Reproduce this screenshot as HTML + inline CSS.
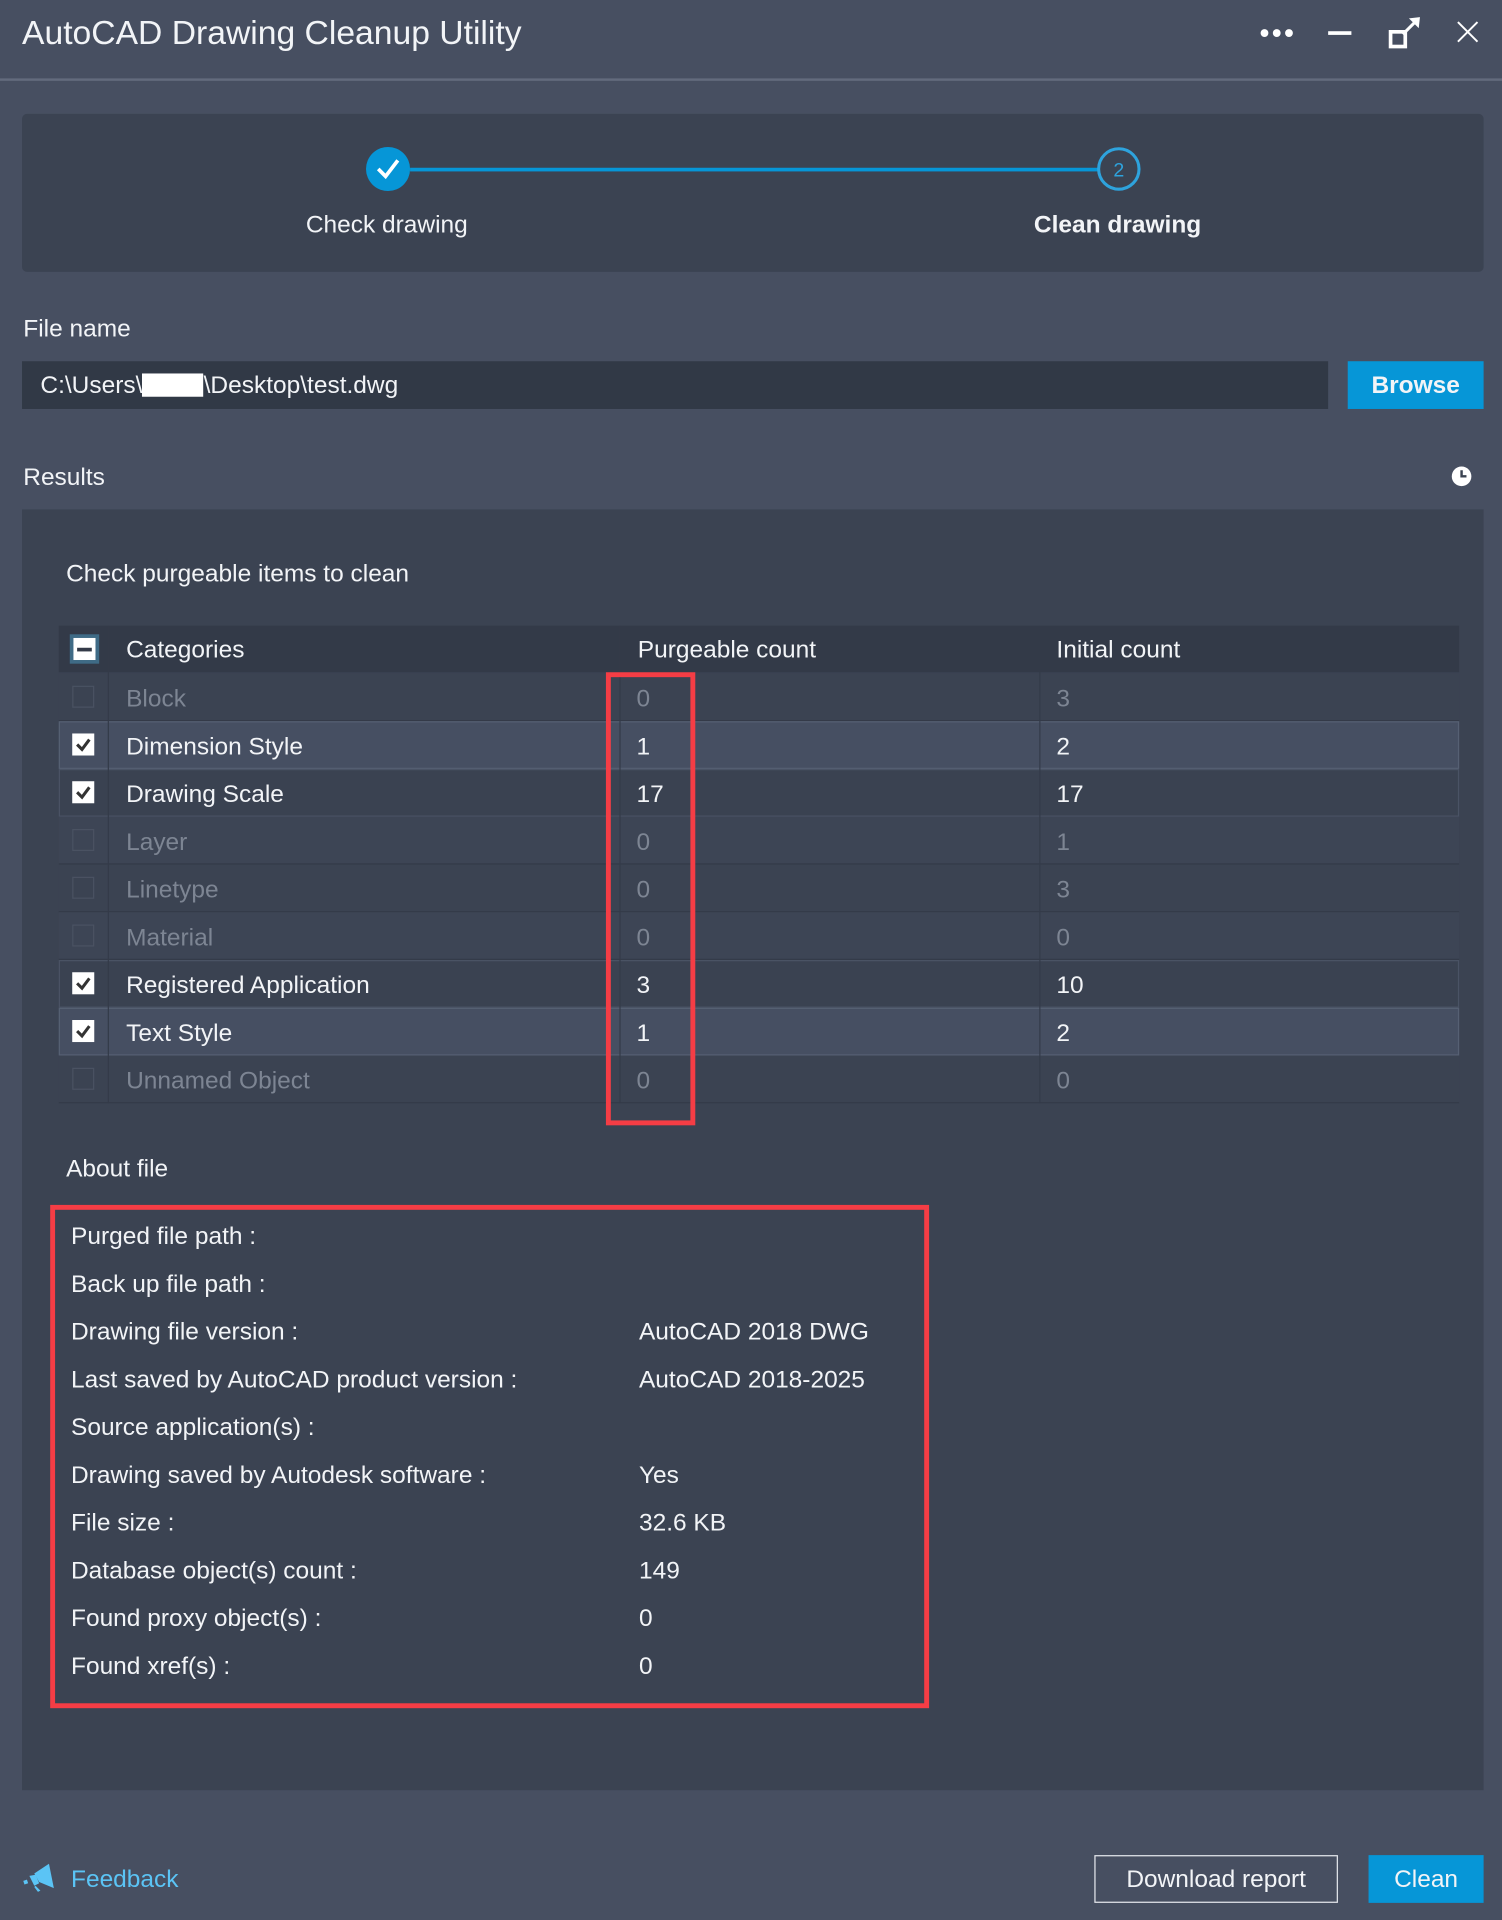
<!DOCTYPE html>
<html><head><meta charset="utf-8"><style>
html,body{margin:0;padding:0;width:1502px;height:1920px;overflow:hidden;background:#474f61}
#w{position:absolute;left:0;top:0;width:1227px;height:1568px;transform:scale(1.2241,1.2245);transform-origin:0 0;font-family:"Liberation Sans",sans-serif;color:#f2f4f7;font-size:20px}
.a{position:absolute;white-space:nowrap}
.cell{position:absolute;height:38px;line-height:40px}
.cb{position:absolute;width:18px;height:18px;border:1px solid #4a5262;left:10px;top:10px;box-sizing:border-box}
.ck{background:#fff;border:none}
</style></head><body><div id="w">
<div class="a" style="left:18px;top:10px;font-size:27.5px;line-height:34px">AutoCAD Drawing Cleanup Utility</div>
<svg class="a" style="left:1020px;top:10px" width="200" height="34" viewBox="0 0 200 34">
<circle cx="13" cy="17" r="3.2" fill="#fff"/><circle cx="23" cy="17" r="3.2" fill="#fff"/><circle cx="33" cy="17" r="3.2" fill="#fff"/>
<rect x="65" y="15.5" width="19" height="3" fill="#fff"/>
<rect x="116" y="16" width="12" height="12" fill="none" stroke="#fff" stroke-width="3"/>
<path d="M126 18 L137 7" stroke="#fff" stroke-width="2.5"/><path d="M131 5 L140 4 L139 13 Z" fill="#fff"/>
<path d="M171 8 L187 24 M187 8 L171 24" stroke="#fff" stroke-width="1.6"/>
</svg>
<div class="a" style="left:0;top:64px;width:1227px;height:2px;background:#636b7d"></div>
<div class="a" style="left:18px;top:93px;width:1194px;height:129px;background:#3b4352;border-radius:4px"></div>
<div class="a" style="left:335px;top:137px;width:562px;height:3px;background:#0696d7"></div>
<svg class="a" style="left:298px;top:119px" width="38" height="38"><circle cx="19" cy="19" r="18" fill="#0696d7"/><path d="M11 19 L17 25 L27 12" stroke="#fff" stroke-width="3" fill="none"/></svg>
<svg class="a" style="left:895px;top:119px" width="38" height="38"><circle cx="19" cy="19" r="16.5" fill="none" stroke="#2ea3dd" stroke-width="2.5"/><text x="19" y="25" text-anchor="middle" font-family="Liberation Sans" font-size="16" fill="#2ea3dd">2</text></svg>
<div class="a" style="left:216px;width:200px;text-align:center;top:173px">Check drawing</div>
<div class="a" style="left:813px;width:200px;text-align:center;top:173px;font-weight:bold">Clean drawing</div>
<div class="a" style="left:19px;top:258px">File name</div>
<div class="a" style="left:18px;top:295px;width:1067px;height:39px;background:#313946"></div>
<div class="a" style="left:33px;top:304px">C:\Users\<span style="display:inline-block;width:50px;height:19px;background:#fff;vertical-align:-3px"></span>\Desktop\test.dwg</div>
<div class="a" style="left:1101px;top:295px;width:111px;height:39px;background:#0696d7;text-align:center;line-height:40px;font-weight:bold">Browse</div>
<div class="a" style="left:19px;top:379px">Results</div>
<svg class="a" style="left:1185px;top:380px" width="18" height="18"><circle cx="9" cy="9" r="8" fill="#fff"/><path d="M9 4 V9 H13" stroke="#3b4352" stroke-width="2" fill="none"/></svg>
<div class="a" style="left:18px;top:416px;width:1194px;height:1046px;background:#3b4352"></div>
<div class="a" style="left:54px;top:458px">Check purgeable items to clean</div>
<div class="a" style="left:48px;top:511px;width:1144px;height:38px;background:#333a48"></div>
<div class="a" style="left:57px;top:518px;width:24px;height:24px;background:#3f6b86"></div>
<div class="a" style="left:60px;top:521px;width:18px;height:18px;background:#fff"></div>
<div class="a" style="left:63px;top:529px;width:12px;height:3px;background:#333a48"></div>
<div class="cell" style="left:103px;top:511px">Categories</div>
<div class="cell" style="left:521px;top:511px">Purgeable count</div>
<div class="cell" style="left:863px;top:511px">Initial count</div>
<div class="a" style="left:48px;top:550px;width:1144px;height:38px;background:#3b4352;border-bottom:1px solid #343b49"></div>
<div class="a" style="left:48px;top:589px;width:1142px;height:37px;background:#464f62;border:1px solid #566073"></div>
<div class="a" style="left:48px;top:628px;width:1142px;height:37px;background:#3a4251;border:1px solid #4a5365"></div>
<div class="a" style="left:48px;top:667px;width:1144px;height:38px;background:#3d4555;border-bottom:1px solid #343b49"></div>
<div class="a" style="left:48px;top:706px;width:1144px;height:38px;background:#3b4352;border-bottom:1px solid #343b49"></div>
<div class="a" style="left:48px;top:745px;width:1144px;height:38px;background:#3d4555;border-bottom:1px solid #343b49"></div>
<div class="a" style="left:48px;top:784px;width:1142px;height:37px;background:#3a4251;border:1px solid #4a5365"></div>
<div class="a" style="left:48px;top:823px;width:1142px;height:37px;background:#464f62;border:1px solid #566073"></div>
<div class="a" style="left:48px;top:862px;width:1144px;height:38px;background:#3b4352;border-bottom:1px solid #343b49"></div>
<div class="a" style="left:88px;top:511px;width:1px;height:390px;background:#343b49"></div>
<div class="a" style="left:506px;top:511px;width:1px;height:390px;background:#343b49"></div>
<div class="a" style="left:849px;top:511px;width:1px;height:390px;background:#343b49"></div>

<div class="a" style="left:48px;top:550px;width:1144px">
 <div style="position:relative;height:39px;color:#7d8593"><div class="cb" style="left:11px"></div><div class="cell" style="left:55px;top:1px">Block</div><div class="cell" style="left:472px;top:1px">0</div><div class="cell" style="left:815px;top:1px">3</div></div>
 <div style="position:relative;height:39px"><div class="cb ck" style="left:11px"><svg width="18" height="18"><path d="M4 9 L8 13 L14 5" stroke="#333" stroke-width="2.5" fill="none"/></svg></div><div class="cell" style="left:55px;top:1px">Dimension Style</div><div class="cell" style="left:472px;top:1px">1</div><div class="cell" style="left:815px;top:1px">2</div></div>
 <div style="position:relative;height:39px"><div class="cb ck" style="left:11px"><svg width="18" height="18"><path d="M4 9 L8 13 L14 5" stroke="#333" stroke-width="2.5" fill="none"/></svg></div><div class="cell" style="left:55px;top:1px">Drawing Scale</div><div class="cell" style="left:472px;top:1px">17</div><div class="cell" style="left:815px;top:1px">17</div></div>
 <div style="position:relative;height:39px;color:#7d8593"><div class="cb" style="left:11px"></div><div class="cell" style="left:55px;top:1px">Layer</div><div class="cell" style="left:472px;top:1px">0</div><div class="cell" style="left:815px;top:1px">1</div></div>
 <div style="position:relative;height:39px;color:#7d8593"><div class="cb" style="left:11px"></div><div class="cell" style="left:55px;top:1px">Linetype</div><div class="cell" style="left:472px;top:1px">0</div><div class="cell" style="left:815px;top:1px">3</div></div>
 <div style="position:relative;height:39px;color:#7d8593"><div class="cb" style="left:11px"></div><div class="cell" style="left:55px;top:1px">Material</div><div class="cell" style="left:472px;top:1px">0</div><div class="cell" style="left:815px;top:1px">0</div></div>
 <div style="position:relative;height:39px"><div class="cb ck" style="left:11px"><svg width="18" height="18"><path d="M4 9 L8 13 L14 5" stroke="#333" stroke-width="2.5" fill="none"/></svg></div><div class="cell" style="left:55px;top:1px">Registered Application</div><div class="cell" style="left:472px;top:1px">3</div><div class="cell" style="left:815px;top:1px">10</div></div>
 <div style="position:relative;height:39px"><div class="cb ck" style="left:11px"><svg width="18" height="18"><path d="M4 9 L8 13 L14 5" stroke="#333" stroke-width="2.5" fill="none"/></svg></div><div class="cell" style="left:55px;top:1px">Text Style</div><div class="cell" style="left:472px;top:1px">1</div><div class="cell" style="left:815px;top:1px">2</div></div>
 <div style="position:relative;height:39px;color:#7d8593"><div class="cb" style="left:11px"></div><div class="cell" style="left:55px;top:1px">Unnamed Object</div><div class="cell" style="left:472px;top:1px">0</div><div class="cell" style="left:815px;top:1px">0</div></div>
</div>
<div class="a" style="left:495px;top:549px;width:65px;height:362px;border:4px solid #f53d45"></div>

<div class="a" style="left:54px;top:944px">About file</div>
<div class="a" style="left:41px;top:984px;width:710px;height:403px;border:4px solid #f53d45"></div>
<div class="a" style="left:58px;top:991px;line-height:39px">Purged file path :<br>Back up file path :<br>Drawing file version :<br>Last saved by AutoCAD product version :<br>Source application(s) :<br>Drawing saved by Autodesk software :<br>File size :<br>Database object(s) count :<br>Found proxy object(s) :<br>Found xref(s) :</div>
<div class="a" style="left:522px;top:991px;line-height:39px"><br><br>AutoCAD 2018 DWG<br>AutoCAD 2018-2025<br><br>Yes<br>32.6 KB<br>149<br>0<br>0</div>

<svg class="a" style="left:18px;top:1520px" width="30" height="28" viewBox="0 0 30 28"><path d="M10 10 L22 2 L26 22 L14 17 Z" fill="#5bc4f5"/><path d="M6 12 L11 11 L14 18 L10 20 Z" fill="#5bc4f5"/><path d="M1 16 L4 15 L5 18 L2 19Z" fill="#5bc4f5"/><path d="M11 20 L15 24 L13 25 L10 21Z" fill="#5bc4f5"/></svg>
<div class="a" style="left:58px;top:1524px;color:#5bc4f5">Feedback</div>
<div class="a" style="left:894px;top:1515px;width:197px;height:37px;border:1px solid #e6e9ee;text-align:center;line-height:39px">Download report</div>
<div class="a" style="left:1118px;top:1515px;width:94px;height:39px;background:#0696d7;text-align:center;line-height:40px">Clean</div>
</div></body></html>
